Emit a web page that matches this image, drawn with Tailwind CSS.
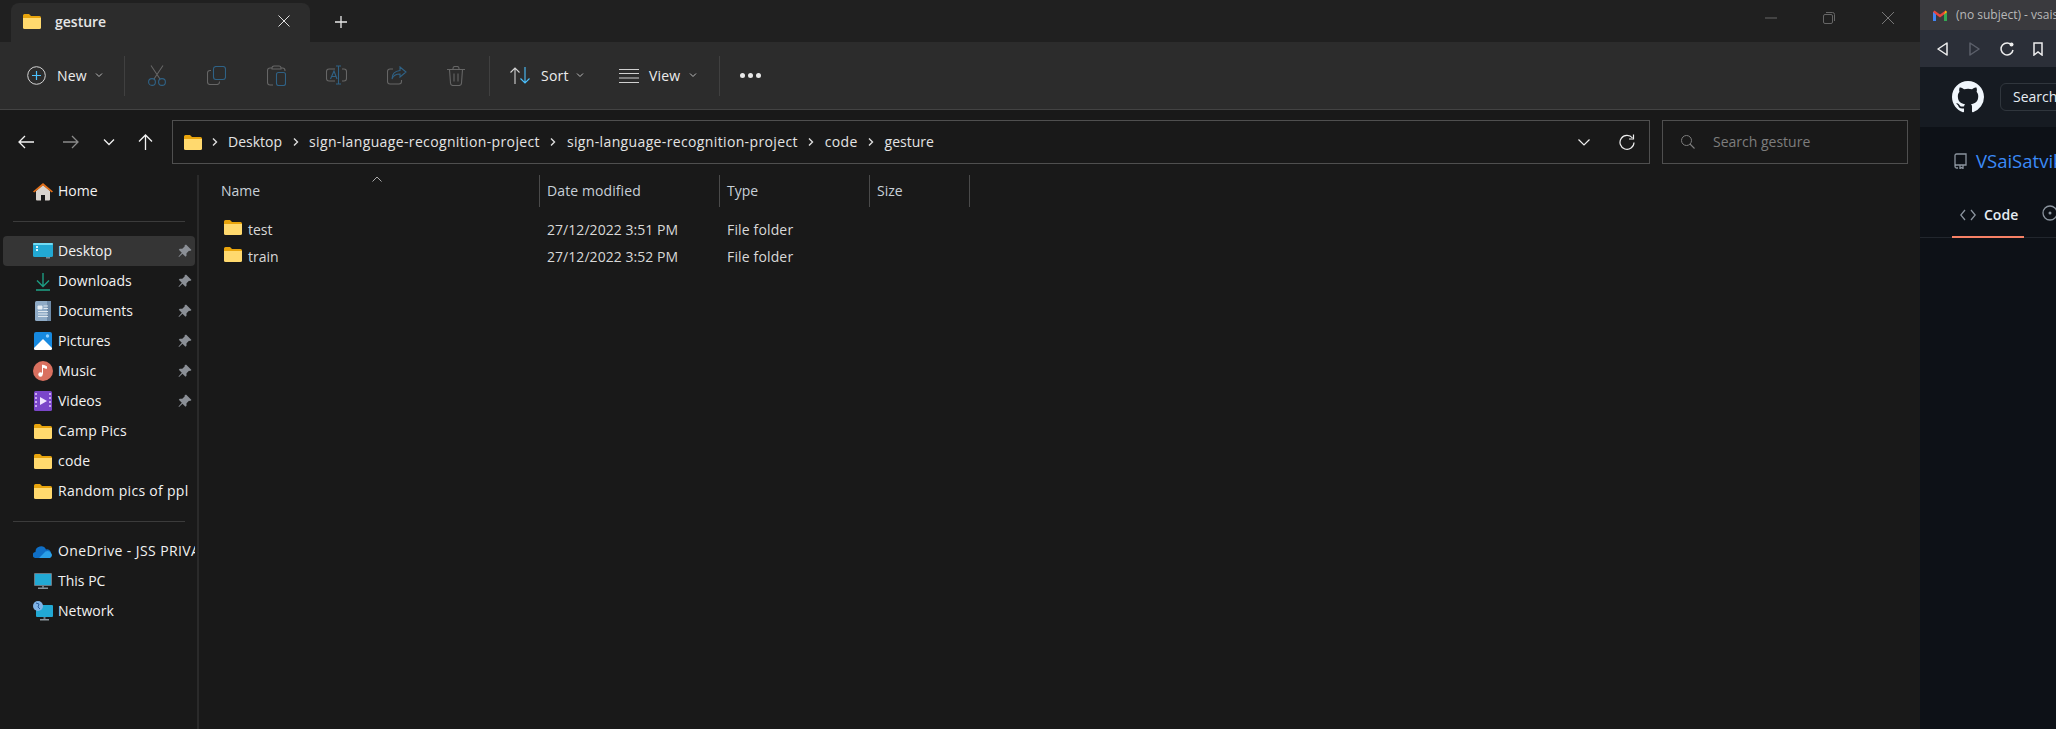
<!DOCTYPE html>
<html lang="en">
<head>
    <meta charset="UTF-8">
    <title>gesture - File Explorer</title>
    <script src="https://cdn.jsdelivr.net/npm/@tailwindcss/browser@4"></script>
</head>
<body class="h-[729px] w-[2056px] overflow-hidden flex bg-[#191919] text-white font-['Open_Sans',sans-serif] text-[14px] leading-5">

    <!-- shared icons -->
    <svg class="hidden">
        <symbol id="folder" viewBox="0 0 18 15">
            <path d="M0 1.5A1.5 1.5 0 0 1 1.5 0H6l2 2h8.500A1.500 1.500 0 0 1 18 3.500V5H0z" fill="#e8a40c"/>
            <path d="M0 4h18v9.500a1.500 1.500 0 0 1-1.500 1.500h-15A1.500 1.500 0 0 1 0 13.500z" fill="#ffd96e"/>
        </symbol>
        <symbol id="pin" viewBox="0 0 14 14">
            <path d="M8 .5l5.500 5.500-1.500 1-1-.3-2.500 2.500v2.500l-1 1-3-3L1 13l-.5-.5 3.300-3.700-3-3 1-1h2.500L6.800 2.300 6.500 1.500z" fill="#8b8f96"/>
        </symbol>
        <symbol id="chev" viewBox="0 0 8 8">
            <path d="M1 1.500l3 3 3-3" fill="none" stroke="currentColor" stroke-width="1"/>
        </symbol>
        <symbol id="crumb" viewBox="0 0 8 12">
            <path d="M2 2.500L5.500 6 2 9.500" fill="none" stroke="currentColor" stroke-width="1.400"/>
        </symbol>
    </svg>

    <!-- explorer window -->
    <div class="w-[1920px] shrink-0 flex flex-col">

        <!-- tab strip -->
        <div class="h-[42px] bg-[#202020] flex items-end pl-[11px] text-[#d8d8d8]">
            <div class="w-[299px] h-[39px] bg-[#2c2c2c] rounded-t-[8px] flex items-center pl-[12px] pr-[20px]">
                <svg class="w-[18px] h-[15px] mb-[2px]"><use href="#folder"/></svg>
                <span class="ml-[14px] mb-[1px] font-semibold text-[14px] text-[#e6e6e6]">gesture</span>
                <svg class="ml-auto w-[12px] h-[12px] mb-[4px]" viewBox="0 0 12 12"><path d="M.5.500l11 11M11.500.500l-11 11" stroke="#e0e0e0" stroke-width="1"/></svg>
            </div>
            <svg class="ml-[25px] mb-[14px] w-[12px] h-[12px]" viewBox="0 0 12 12"><path d="M6 0v12M0 6h12" stroke="#e8e8e8" stroke-width="1.300"/></svg>
            <div class="ml-auto self-start flex items-center h-[36px] text-[#6f6f6f]">
                <svg class="w-[12px] h-[12px]" viewBox="0 0 12 12"><path d="M0 6h12" stroke="#666" stroke-width="1"/></svg>
                <svg class="ml-[46px] w-[12px] h-[12px]" viewBox="0 0 12 12"><rect x=".5" y="2.500" width="9" height="9" rx="1.500" fill="none" stroke="#666"/><path d="M3 .5h6.500A2 2 0 0 1 11.500 2.500V9" fill="none" stroke="#666"/></svg>
                <svg class="ml-[47px] mr-[26px] w-[12px] h-[12px]" viewBox="0 0 12 12"><path d="M0 0l12 12M12 0L0 12" stroke="#777" stroke-width="1"/></svg>
            </div>
        </div>

        <!-- command bar -->
        <div class="h-[68px] bg-[#2c2c2c] border-b border-[#434343] flex items-center text-[#ececec]">
            <svg class="ml-[27px] w-[19px] h-[19px]" viewBox="0 0 19 19"><circle cx="9.500" cy="9.500" r="8.800" fill="none" stroke="#d4d4d4" stroke-width="1"/><path d="M9.500 5v9M5 9.500h9" stroke="#4cc2ff" stroke-width="1.200"/></svg>
            <span class="ml-[11px] w-[34px] tracking-[0.2px]">New</span>
            <svg class="ml-[4px] w-[8px] h-[8px] text-[#bbb]"><use href="#chev"/></svg>
            <div class="ml-[21px] w-px h-[40px] bg-[#404040]"></div>

            <svg class="ml-[23px] w-[18px] h-[21px]" viewBox="0 0 18 21"><g fill="none" stroke-width="1.100"><path d="M3 .5l9 13.500M15 .5L6 14" stroke="#666"/><circle cx="4" cy="17" r="3.400" stroke="#2f6286"/><circle cx="14" cy="17" r="3.400" stroke="#2f6286"/></g></svg>
            <svg class="ml-[41px] w-[19px] h-[19px]" viewBox="0 0 19 19"><g fill="none" stroke-width="1.100"><rect x="6.500" y=".5" width="12" height="13" rx="2.500" stroke="#2f6286"/><path d="M4 4.500H3A2.500 2.500 0 0 0 .5 7v9A2.500 2.500 0 0 0 3 18.500h7a2.500 2.500 0 0 0 2.500-2.500v-.5" stroke="#666"/></g></svg>
            <svg class="ml-[41px] w-[19px] h-[21px]" viewBox="0 0 19 21"><g fill="none" stroke-width="1.100"><path d="M5 3H3A2.500 2.500 0 0 0 .5 5.500v12A2.500 2.500 0 0 0 3 20h3M14 3h1.500A2.500 2.500 0 0 1 18 5.500V6M5 3a2 2 0 0 1 2-2h5a2 2 0 0 1 2 2v1H5z" stroke="#666"/><rect x="9.500" y="7.500" width="9" height="13" rx="2" stroke="#2f6286"/></g></svg>
            <svg class="ml-[40px] w-[21px] h-[21px]" viewBox="0 0 21 21"><g fill="none" stroke-width="1.100"><path d="M9 4H3A2.500 2.500 0 0 0 .5 6.500v7A2.500 2.500 0 0 0 3 16h6M16 4h2a2.500 2.500 0 0 1 2.500 2.500v7A2.500 2.500 0 0 1 18 16h-2" stroke="#666"/><path d="M10 1h2.500M15 1h-2.500v18H10M15 19h-2.500M4.500 14L8 6l3 8M5.500 11.500h5" stroke="#2f6286"/></g></svg>
            <svg class="ml-[40px] w-[20px] h-[19px]" viewBox="0 0 20 19"><g fill="none" stroke-width="1.100"><path d="M6 3H3A2.500 2.500 0 0 0 .5 5.500v10A2.500 2.500 0 0 0 3 18h9a2.500 2.500 0 0 0 2.500-2.500V14" stroke="#666"/><path d="M13 1l6 5-6 5V8C9 8 6 10 5 13c0-5 3-8 8-8.500z" stroke="#2f6286"/></g></svg>
            <svg class="ml-[40px] w-[18px] h-[20px]" viewBox="0 0 18 20"><path d="M0 3.500h18M6 3.500V2.500A2 2 0 0 1 8 .5h2a2 2 0 0 1 2 2v1M2.500 3.500l1 13.500a2.500 2.500 0 0 0 2.500 2.500h6a2.500 2.500 0 0 0 2.500-2.500l1-13.500M7 7.500v8M11 7.500v8" fill="none" stroke="#666" stroke-width="1.100"/></svg>
            <div class="ml-[24px] w-px h-[40px] bg-[#404040]"></div>

            <svg class="ml-[20px] w-[20px] h-[17px]" viewBox="0 0 20 17"><path d="M5 17V1M.5 5.500L5 1l4.500 4.500" fill="none" stroke="#d4d4d4" stroke-width="1.100"/><path d="M15 0v16M10.500 11.500L15 16l4.500-4.500" fill="none" stroke="#4cc2ff" stroke-width="1.100"/></svg>
            <span class="ml-[11px] w-[28px] tracking-[0.2px]">Sort</span>
            <svg class="ml-[7px] w-[8px] h-[8px] text-[#bbb]"><use href="#chev"/></svg>
            <svg class="ml-[35px] w-[20px] h-[14px]" viewBox="0 0 20 14"><path d="M0 .5h20M0 4.500h20M0 9h20M0 13.500h20" stroke="#d0d0d0" stroke-width="1"/></svg>
            <span class="ml-[10px] w-[33px] tracking-[0.2px]">View</span>
            <svg class="ml-[7px] w-[8px] h-[8px] text-[#bbb]"><use href="#chev"/></svg>
            <div class="ml-[22px] w-px h-[40px] bg-[#404040]"></div>
            <div class="ml-[20px] flex gap-[3px]">
                <div class="w-[5px] h-[5px] rounded-full bg-[#e8e8e8]"></div>
                <div class="w-[5px] h-[5px] rounded-full bg-[#e8e8e8]"></div>
                <div class="w-[5px] h-[5px] rounded-full bg-[#e8e8e8]"></div>
            </div>
        </div>

        <!-- address row -->
        <div class="h-[65px] flex items-start pt-[10px] shrink-0">
            <div class="h-[44px] flex items-center w-[172px] shrink-0">
                <svg class="ml-[18px] w-[16px] h-[14px]" viewBox="0 0 16 14"><path d="M16 7H1M7 1L1 7l6 6" fill="none" stroke="#f2f2f2" stroke-width="1.300"/></svg>
                <svg class="ml-[29px] w-[16px] h-[14px]" viewBox="0 0 16 14"><path d="M0 7h15M9 1l6 6-6 6" fill="none" stroke="#8a8a8a" stroke-width="1.300"/></svg>
                <svg class="ml-[24px] w-[12px] h-[8px]" viewBox="0 0 12 8"><path d="M1 1.500l5 5 5-5" fill="none" stroke="#f0f0f0" stroke-width="1.300"/></svg>
                <svg class="ml-[23px] w-[15px] h-[16px]" viewBox="0 0 15 16"><path d="M7.500 16V1M1 7.500L7.500 1 14 7.500" fill="none" stroke="#f2f2f2" stroke-width="1.300"/></svg>
            </div>
            <div class="w-[1478px] h-[44px] border border-[#4f4f4f] flex items-center pl-[11px] text-[#e4e4e4]">
                <svg class="w-[18px] h-[15px]"><use href="#folder"/></svg>
                <svg class="mx-[8px] w-[10px] h-[12px] text-[#ddd]" viewBox="0 0 8 12"><use href="#crumb"/></svg>
                <span>Desktop</span>
                <svg class="mx-[8.500px] w-[10px] h-[12px] text-[#ddd]" viewBox="0 0 8 12"><use href="#crumb"/></svg>
                <span class="tracking-[0.36px]">sign-language-recognition-project</span>
                <svg class="mx-[8.500px] w-[10px] h-[12px] text-[#ddd]" viewBox="0 0 8 12"><use href="#crumb"/></svg>
                <span class="tracking-[0.36px]">sign-language-recognition-project</span>
                <svg class="mx-[8.500px] w-[10px] h-[12px] text-[#ddd]" viewBox="0 0 8 12"><use href="#crumb"/></svg>
                <span class="tracking-[0.3px]">code</span>
                <svg class="mx-[8.500px] w-[10px] h-[12px] text-[#ddd]" viewBox="0 0 8 12"><use href="#crumb"/></svg>
                <span>gesture</span>
                <svg class="ml-auto w-[12px] h-[7px]" viewBox="0 0 12 7"><path d="M.5.500L6 6 11.500.500" fill="none" stroke="#eee" stroke-width="1.200"/></svg>
                <svg class="ml-[29px] mr-[14px] w-[16px] h-[16px]" viewBox="0 0 16 16"><path d="M13.500 4A7 7 0 1 0 15 8.500" fill="none" stroke="#eee" stroke-width="1.200"/><path d="M14.500.5v4.500H10" fill="none" stroke="#eee" stroke-width="1.200"/></svg>
            </div>
            <div class="ml-[12px] w-[246px] h-[44px] border border-[#4f4f4f] flex items-center pl-[18px] text-[#7d7d7d]">
                <svg class="w-[14px] h-[14px]" viewBox="0 0 14 14"><circle cx="5.500" cy="5.500" r="5" fill="none" stroke="#7d7d7d"/><path d="M9 9l4.500 4.500" stroke="#7d7d7d" stroke-width="1.100"/></svg>
                <span class="ml-[18px]">Search gesture</span>
            </div>
        </div>

        <!-- body -->
        <div class="flex-1 flex min-h-0">

            <!-- nav pane -->
            <div class="w-[199px] shrink-0 border-r-2 border-[#2a2a2a] pt-[1px] pl-[3px] pr-[2px] text-[#f2f2f2]">
                <div class="h-[30px] flex items-center pl-[30px] gap-[5px]">
                    <svg class="w-[20px] h-[19px]" viewBox="0 0 20 19"><path d="M3 9v8.500a1 1 0 0 0 1 1h4V13h4v5.500h4a1 1 0 0 0 1-1V9L10 3z" fill="#d9d4cf"/><path d="M0 9.500L10 1l10 8.500-1.200 1L10 3.500 1.200 10.500z" fill="#e3701a"/></svg>
                    <span>Home</span>
                </div>
                <div class="mx-[10px] my-[14.500px] h-px bg-[#3b3b3b]"></div>
                <div class="h-[30px] flex items-center pl-[30px] gap-[5px] bg-[#353535] rounded-[4px] w-[192px]">
                    <svg class="w-[20px] h-[16px]" viewBox="0 0 20 16"><rect width="20" height="14" rx="1.500" fill="#22a9d4"/><rect y="0" width="20" height="2" rx="1" fill="#70dcf5"/><path d="M3 3h2v2H3zM3 6h2v2H3z" fill="#d9f5ff"/><rect x="13" y="14" width="4" height="1.500" fill="#7b8a94"/></svg>
                    <span>Desktop</span>
                    <svg class="ml-auto mr-[3px] w-[14px] h-[14px]"><use href="#pin"/></svg>
                </div>
                <div class="h-[30px] flex items-center pl-[30px] gap-[5px] w-[192px]">
                    <svg class="w-[20px] h-[19px]" viewBox="0 0 20 19"><path d="M10 1v13M4 8.500l6 6 6-6" fill="none" stroke="#1d9c82" stroke-width="1.400"/><path d="M3 18h14" stroke="#1d9c82" stroke-width="1.600"/></svg>
                    <span class="tracking-[0.1px]">Downloads</span>
                    <svg class="ml-auto mr-[3px] w-[14px] h-[14px]"><use href="#pin"/></svg>
                </div>
                <div class="h-[30px] flex items-center pl-[30px] gap-[5px] w-[192px]">
                    <svg class="w-[20px] h-[20px]" viewBox="0 0 20 20"><rect x="2" width="16" height="20" rx="1.500" fill="#8fabc6"/><rect x="14" width="4" height="20" fill="#6f8ba8"/><path d="M5 5h4v3H5zM10.500 5H15M10.500 7.500H15M5 10.500h10M5 13h10M5 15.500h10" fill="#e8eef4" stroke="#e8eef4" stroke-width=".9"/></svg>
                    <span>Documents</span>
                    <svg class="ml-auto mr-[3px] w-[14px] h-[14px]"><use href="#pin"/></svg>
                </div>
                <div class="h-[30px] flex items-center pl-[30px] gap-[5px] w-[192px]">
                    <svg class="w-[20px] h-[18px]" viewBox="0 0 20 18"><rect x="1" width="18" height="18" rx="2" fill="#1689e0"/><circle cx="14.500" cy="4" r="1.700" fill="#8fd0ff"/><path d="M1 16l9-9 9 9v.5a1.500 1.500 0 0 1-1.500 1.500h-15A1.500 1.500 0 0 1 1 16.500z" fill="#fff"/></svg>
                    <span>Pictures</span>
                    <svg class="ml-auto mr-[3px] w-[14px] h-[14px]"><use href="#pin"/></svg>
                </div>
                <div class="h-[30px] flex items-center pl-[30px] gap-[5px] w-[192px]">
                    <svg class="w-[20px] h-[20px]" viewBox="0 0 20 20"><circle cx="10" cy="10" r="10" fill="#d9705f"/><path d="M9.500 4v9M9.500 4l4 1.500v2l-4-1.500" stroke="#fff" fill="#fff" stroke-width="1"/><circle cx="7.500" cy="13.500" r="2.200" fill="#fff"/></svg>
                    <span>Music</span>
                    <svg class="ml-auto mr-[3px] w-[14px] h-[14px]"><use href="#pin"/></svg>
                </div>
                <div class="h-[30px] flex items-center pl-[30px] gap-[5px] w-[192px]">
                    <svg class="w-[20px] h-[20px]" viewBox="0 0 20 20"><rect x="1" width="18" height="20" rx="1.500" fill="#7a46c9"/><path d="M2 2h2v2H2zM2 6h2v2H2zM2 10h2v2H2zM2 14h2v2H2zM16 2h2v2h-2zM16 6h2v2h-2zM16 10h2v2h-2zM16 14h2v2h-2z" fill="#c9a7f2"/><path d="M7 6l7 4-7 4z" fill="#f1e6ff"/></svg>
                    <span>Videos</span>
                    <svg class="ml-auto mr-[3px] w-[14px] h-[14px]"><use href="#pin"/></svg>
                </div>
                <div class="h-[30px] flex items-center pl-[31px] gap-[5px]">
                    <svg class="w-[18px] h-[15px] mr-[1px]"><use href="#folder"/></svg>
                    <span class="tracking-[0.2px]">Camp Pics</span>
                </div>
                <div class="h-[30px] flex items-center pl-[31px] gap-[5px]">
                    <svg class="w-[18px] h-[15px] mr-[1px]"><use href="#folder"/></svg>
                    <span class="tracking-[0.2px]">code</span>
                </div>
                <div class="h-[30px] flex items-center pl-[31px] gap-[5px]">
                    <svg class="w-[18px] h-[15px] mr-[1px]"><use href="#folder"/></svg>
                    <span class="whitespace-nowrap tracking-[0.3px]">Random pics of ppl</span>
                </div>
                <div class="mx-[10px] my-[14.500px] h-px bg-[#3b3b3b]"></div>
                <div class="h-[30px] flex items-center pl-[30px] gap-[5px] overflow-hidden w-[192px]">
                    <svg class="w-[20px] h-[13px] shrink-0" viewBox="0 0 20 13"><path d="M8 13H3a3 3 0 0 1-.5-6A5.500 5.500 0 0 1 13 4.500 4 4 0 0 1 18 8z" fill="#0f6fc6"/><path d="M6 13l5-5a4 4 0 0 1 7 0 3 3 0 0 1-1 5z" fill="#2aa0e8"/></svg>
                    <span class="whitespace-nowrap tracking-[0.4px]">OneDrive - JSS PRIVATE</span>
                </div>
                <div class="h-[30px] flex items-center pl-[31px] gap-[5px]">
                    <svg class="w-[18px] h-[16px] mr-[1px]" viewBox="0 0 18 16"><rect width="18" height="13" rx="1" fill="#6b7882"/><rect x="1" y="1" width="16" height="11" fill="#22a9d4"/><rect x="4" y="14.500" width="10" height="1.500" fill="#8a959c"/><rect x="8" y="13" width="2" height="2" fill="#6b7882"/></svg>
                    <span>This PC</span>
                </div>
                <div class="h-[30px] flex items-center pl-[30px] gap-[5px]">
                    <svg class="w-[20px] h-[20px]" viewBox="0 0 20 20"><rect x="3" y="4" width="17" height="12" rx="1" fill="#22a9d4"/><rect x="7" y="18" width="9" height="1.500" fill="#8a959c"/><rect x="10.500" y="16" width="2" height="2" fill="#6b7882"/><circle cx="5" cy="5" r="5" fill="#7fb3e6"/><path d="M3 2l3 1-1 3 2 2" stroke="#2c5f9e" fill="none"/></svg>
                    <span>Network</span>
                </div>
            </div>

            <!-- file list -->
            <div class="flex-1 relative pl-[22px] text-[#d8d8d8]">
                <svg class="absolute left-[173px] top-[1px] w-[10px] h-[6px]" viewBox="0 0 10 6"><path d="M.5 5.500L5 1l4.500 4.500" fill="none" stroke="#aaa"/></svg>
                <div class="flex h-[32px] text-[#c8d0d8]">
                    <div class="w-[318px] flex items-center pb-[1px]">Name</div>
                    <div class="w-[180px] border-l border-[#4a4a4a] pl-[7px] flex items-center tracking-[0.1px]">Date modified</div>
                    <div class="w-[150px] border-l border-[#4a4a4a] pl-[7px] flex items-center">Type</div>
                    <div class="w-[101px] border-l border-r border-[#4a4a4a] pl-[7px] flex items-center">Size</div>
                </div>
                <div class="flex h-[27px] mt-[9px] items-center">
                    <div class="w-[318px] flex items-center pl-[3px] gap-[6px]"><svg class="w-[18px] h-[15px] mb-[5px]"><use href="#folder"/></svg><span>test</span></div>
                    <div class="w-[180px] pl-[8px] tracking-[0.05px]">27/12/2022 3:51 PM</div>
                    <div class="pl-[8px] tracking-[0.15px]">File folder</div>
                </div>
                <div class="flex h-[27px] items-center">
                    <div class="w-[318px] flex items-center pl-[3px] gap-[6px]"><svg class="w-[18px] h-[15px] mb-[5px]"><use href="#folder"/></svg><span>train</span></div>
                    <div class="w-[180px] pl-[8px] tracking-[0.05px]">27/12/2022 3:52 PM</div>
                    <div class="pl-[8px] tracking-[0.15px]">File folder</div>
                </div>
            </div>
        </div>
    </div>

    <!-- browser sliver on the right -->
    <div class="w-[136px] shrink-0 overflow-hidden flex flex-col bg-[#0d1117]">
        <div class="h-[30px] bg-[#3a3a3e] flex items-center pl-[13px] text-[#b8b8b8] text-[12px] whitespace-nowrap">
            <svg class="w-[14px] h-[11px] shrink-0" viewBox="0 0 14 11"><path d="M0 2v9h3V4.500L7 7.500l4-3V11h3V2L12.500.5 7 4.500 1.500.5z" fill="#e8453c"/><path d="M0 2v9h3V4.500z" fill="#4285f4"/><path d="M14 2v9h-3V4.500z" fill="#34a853"/><path d="M11 4.500L12.500.5 14 2z" fill="#fbbc04"/></svg>
            <span class="ml-[9px]">(no subject) - vsaisatvik@gmail.com</span>
        </div>
        <div class="h-[37px] bg-[#2b2f38] flex items-center pl-[17px]">
            <svg class="w-[11px] h-[14px]" viewBox="0 0 11 14"><path d="M10 1L1 7l9 6z" fill="none" stroke="#eee" stroke-width="1.500" stroke-linejoin="round"/></svg>
            <svg class="ml-[21px] w-[11px] h-[14px]" viewBox="0 0 11 14"><path d="M1 1l9 6-9 6z" fill="none" stroke="#5c606a" stroke-width="1.500" stroke-linejoin="round"/></svg>
            <svg class="ml-[20px] w-[14px] h-[14px]" viewBox="0 0 14 14"><path d="M12 3.500A6 6 0 1 0 13 8" fill="none" stroke="#eee" stroke-width="1.500"/><circle cx="11.500" cy="2.500" r="2" fill="#eee"/></svg>
            <svg class="ml-[19px] w-[10px] h-[14px]" viewBox="0 0 10 14"><path d="M1 1h8v12L5 10l-4 3z" fill="none" stroke="#eee" stroke-width="1.500"/></svg>
        </div>
        <div class="h-[60px] bg-[#161b22] flex items-center pl-[32px]">
            <svg class="w-[32px] h-[32px] shrink-0" viewBox="0 0 16 16"><path fill="#f0f6fc" d="M8 0C3.580 0 0 3.580 0 8c0 3.540 2.290 6.530 5.470 7.590.4.070.55-.17.55-.38 0-.19-.01-.82-.01-1.490-2.010.37-2.530-.49-2.690-.94-.09-.23-.48-.94-.82-1.130-.28-.15-.68-.52-.01-.53.630-.01 1.080.58 1.230.82.720 1.210 1.870.87 2.330.66.070-.52.280-.87.510-1.070-1.780-.2-3.640-.89-3.640-3.950 0-.87.310-1.590.820-2.150-.08-.2-.36-1.020.08-2.120 0 0 .67-.21 2.200.82.640-.18 1.320-.27 2-.27s1.360.09 2 .27c1.530-1.040 2.200-.82 2.200-.82.440 1.100.16 1.920.08 2.120.51.560.82 1.270.82 2.150 0 3.070-1.870 3.750-3.650 3.950.29.250.54.730.54 1.480 0 1.070-.01 1.930-.01 2.200 0 .21.150.46.550.38A8.010 8.010 0 0 0 16 8c0-4.420-3.580-8-8-8z"/></svg>
            <div class="ml-[16px] w-[100px] h-[28px] shrink-0 border border-[#30363d] rounded-[6px] pl-[12px] flex items-center text-[#e6edf3] text-[14px]">Search</div>
        </div>
        <div class="h-[66px] flex items-center pl-[34px] pt-[1px]">
            <svg class="w-[13px] h-[16px] shrink-0" viewBox="0 0 13 16"><path d="M1 13V2.500A1.500 1.500 0 0 1 2.500 1H12v11H2.500A1.500 1.500 0 0 0 1 13.500 1.500 1.500 0 0 0 2.500 15H4M9 12v3M6 12v3.500l1.500-1 1.500 1V12" fill="none" stroke="#8b949e" stroke-width="1.300"/></svg>
            <span class="ml-[9px] text-[#3b8bf8] text-[18.500px] whitespace-nowrap">VSaiSatvik</span>
        </div>
        <div class="h-[45px] pl-[32px] border-b border-[#21262d] flex relative">
            <div class="w-[72px] h-[45px] border-b-2 border-[#f78166] flex items-center pl-[8px] text-[#e6edf3] font-semibold text-[14px] shrink-0 -mb-px">
                <svg class="w-[16px] h-[12px]" viewBox="0 0 16 12"><path d="M5 1L.8 6 5 11M11 1l4.200 5L11 11" fill="none" stroke="#8b949e" stroke-width="1.300"/></svg>
                <span class="ml-[8px]">Code</span>
            </div>
            <svg class="ml-[18px] mt-[12px] w-[16px] h-[16px] shrink-0" viewBox="0 0 16 16"><circle cx="8" cy="8" r="7" fill="none" stroke="#8b949e" stroke-width="1.300"/><circle cx="8" cy="8" r="1.500" fill="#8b949e"/></svg>
        </div>
    </div>
</body>
</html>
